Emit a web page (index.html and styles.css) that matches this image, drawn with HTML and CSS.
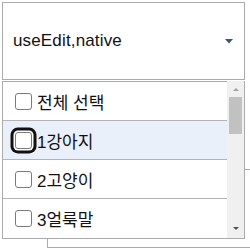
FILE: index.html
```html
<!DOCTYPE html>
<html lang="ko">
<head>
  <meta charset="UTF-8">
  <title>useEdit native</title>
  <link rel="stylesheet" href="styles.css">
</head>
<body>
  <div class="page">
    <div class="select-box">
      <span class="select-value">useEdit,native</span>
      <svg class="select-arrow" width="8" height="5" viewBox="0 0 8 5">
        <polygon points="0,0 8,0 4,4.5" fill="#3d5670"/>
      </svg>
    </div>

    <div class="next-field"></div>

    <div class="dropdown">
      <div class="options">
        <label class="option">
          <span class="check"></span>
          <span class="option-text">전체 선택</span>
        </label>
        <label class="option active">
          <span class="check focused"></span>
          <span class="option-text">1강아지</span>
        </label>
        <label class="option">
          <span class="check"></span>
          <span class="option-text">2고양이</span>
        </label>
        <label class="option">
          <span class="check"></span>
          <span class="option-text">3얼룩말</span>
        </label>
      </div>
      <div class="scrollbar">
        <span class="arrow-up"></span>
        <span class="thumb"></span>
        <span class="spacer"></span>
        <span class="arrow-down"></span>
      </div>
    </div>
  </div>
</body>
</html>
```

FILE: styles.css
```css
body {
  margin: 0;
  background-color: #fff;
  font-family: 'Liberation Sans', 'Noto Sans CJK KR', sans-serif;
  color: #111;
  overflow: hidden;
}
.page {
  position: relative;
  width: 250px;
  height: 248px;
  padding: 2px 0 0 2px;
  box-sizing: border-box;
}
.select-box {
  width: 243px;
  height: 78px;
  box-sizing: border-box;
  border: 1px solid #ababab;
  display: flex;
  align-items: center;
  justify-content: space-between;
  padding: 0 11px 0 10px;
}
.select-value {
  font-size: 17px;
  letter-spacing: 0.15px;
}
.select-arrow {
  display: block;
  margin-top: 1px;
}
.next-field {
  margin: 89px 0 0 45px;
  width: 203px;
  height: 79px;
  box-sizing: border-box;
  border: 1px solid #ababab;
  border-right: none;
}
.dropdown {
  position: absolute;
  top: 81px;
  left: 2px;
  width: 243px;
  height: 158px;
  box-sizing: border-box;
  border: 1px solid #ababab;
  border-top: none;
  background-color: #fff;
  display: flex;
}
.options {
  flex: 1;
  border-top: 1px solid #ababab;
}
.option {
  display: flex;
  align-items: center;
  height: 38px;
  border-bottom: 1px solid #b4b4b4;
  padding-left: 12px;
  font-size: 17px;
}
.option:last-child {
  border-bottom: none;
}
.option.active {
  background-color: #e9f0fa;
}
.check {
  width: 17px;
  height: 17px;
  box-sizing: border-box;
  border: 1.5px solid #7c7c7c;
  border-radius: 3px;
  background-color: #fff;
  margin-right: 5px;
}
.check.focused {
  box-shadow: 0 0 0 1.5px #fff, 0 0 0 4.5px #111;
}
.scrollbar {
  width: 17px;
  background-color: #f0f0f0;
  display: flex;
  flex-direction: column;
  align-items: center;
}
.arrow-up {
  width: 0;
  height: 0;
  margin-top: 7px;
  border-left: 3.5px solid transparent;
  border-right: 3.5px solid transparent;
  border-bottom: 3.5px solid #a3a3a3;
}
.thumb {
  width: 13px;
  height: 37px;
  margin-top: 6px;
  background-color: #c1c1c1;
}
.spacer {
  flex: 1;
}
.arrow-down {
  width: 0;
  height: 0;
  margin-bottom: 8px;
  border-left: 3.5px solid transparent;
  border-right: 3.5px solid transparent;
  border-top: 3.5px solid #505050;
}
```
